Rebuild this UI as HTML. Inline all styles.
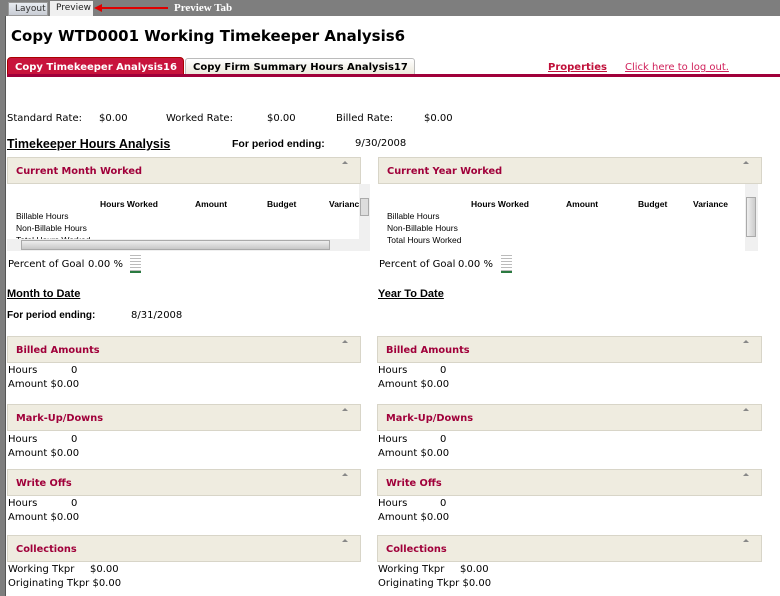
<!DOCTYPE html>
<html><head><meta charset="utf-8"><style>
*{margin:0;padding:0;box-sizing:border-box}
body{width:780px;height:596px;position:relative;overflow:hidden;background:#fff;font-family:"DejaVu Sans",Verdana,sans-serif;font-size:10px;color:#000}
.a{position:absolute;white-space:nowrap;margin-top:2px}
.ph{position:absolute;height:27px;background:#efece0;border:1px solid #d8d5c8}
.ph span{position:absolute;left:8px;top:8px;color:#a0003a;font-weight:bold;font-size:9.8px}
.ph i{position:absolute;right:12px;top:3px;width:0;height:0;border-left:3px solid transparent;border-right:3px solid transparent;border-bottom:3px solid #888}
.ar{font-family:"Liberation Sans",Arial,sans-serif}
.sm{font-family:"Liberation Sans",Arial,sans-serif;font-size:8.5px}
.bar{position:absolute;width:11px;height:18px;background:repeating-linear-gradient(#bbb 0 1px,#fff 1px 3px)}
.bar:after{content:"";position:absolute;left:0;bottom:0;width:11px;height:2px;background:#2a7a40}
.z{margin-top:0}
</style></head><body>
<div class="a z" style="left:0;top:0;width:780px;height:16px;background:#7e7e7e"></div>
<div class="a z" style="left:0;top:0;width:5px;height:596px;background:#7e7e7e"></div>
<div class="a z" style="left:5px;top:16px;width:1px;height:580px;background:#555"></div>
<div class="a z" style="left:8px;top:2px;width:40px;height:14px;background:linear-gradient(#e8ecf2,#c8ccd4);border:1px solid #999;font-size:9px;padding:1px 0 0 6px;color:#333">Layout</div>
<div class="a z" style="left:50px;top:1px;width:43px;height:15px;background:#f0f0f0;font-size:9px;padding:2px 0 0 6px;color:#222">Preview</div>
<div class="a z" style="left:98px;top:7px;width:70px;height:2px;background:#e00000"></div>
<div class="a z" style="left:94px;top:4px;width:0;height:0;border-top:4px solid transparent;border-bottom:4px solid transparent;border-right:8px solid #e00000"></div>
<div class="a z" style="left:174px;top:2px;color:#fff;font-family:'Liberation Serif',serif;font-weight:bold;font-size:11px">Preview Tab</div>
<div class="a" style="left:11px;top:25px;font-weight:bold;font-size:15px">Copy WTD0001 Working Timekeeper Analysis6</div>
<div class="a z" style="left:7px;top:57px;width:177px;height:19px;background:#c8143c;border:1px solid #a00;border-radius:4px 4px 0 0;color:#fff;font-weight:bold;font-size:10px;padding:4px 0 0 7px">Copy Timekeeper Analysis16</div>
<div class="a z" style="left:185px;top:58px;width:230px;height:17px;background:linear-gradient(#fff,#ece9dc);border:1px solid #bbb;border-radius:3px 3px 0 0;font-weight:bold;font-size:10px;padding:3px 0 0 7px">Copy Firm Summary Hours Analysis17</div>
<div class="a z" style="left:7px;top:74px;width:773px;height:3px;background:#a0003a"></div>
<div class="a" style="left:548px;top:60px;color:#c0103a;font-weight:bold;text-decoration:underline">Properties</div>
<div class="a" style="left:625px;top:60px;color:#d0205a;text-decoration:underline">Click here to log out.</div>
<div class="a" style="left:7px;top:111px">Standard Rate:</div><div class="a" style="left:99px;top:111px">$0.00</div>
<div class="a" style="left:166px;top:111px">Worked Rate:</div><div class="a" style="left:267px;top:111px">$0.00</div>
<div class="a" style="left:336px;top:111px">Billed Rate:</div><div class="a" style="left:424px;top:111px">$0.00</div>
<div class="a ar" style="left:7px;top:135px;font-weight:bold;font-size:12.5px;text-decoration:underline">Timekeeper Hours Analysis</div>
<div class="a ar" style="left:232px;top:136px;font-weight:bold;font-size:10.5px">For period ending:</div>
<div class="a" style="left:355px;top:136px">9/30/2008</div>

<div class="ph" style="left:7px;top:157px;width:354px"><span>Current Month Worked</span><i></i></div>
<div class="ph" style="left:378px;top:157px;width:384px"><span>Current Year Worked</span><i></i></div>
<div class="a z" style="left:7px;top:184px;width:364px;height:67px;overflow:hidden">
 <div class="a sm" style="left:93px;top:13px;font-weight:bold">Hours Worked</div>
 <div class="a sm" style="left:188px;top:13px;font-weight:bold">Amount</div>
 <div class="a sm" style="left:260px;top:13px;font-weight:bold">Budget</div>
 <div class="a sm" style="left:322px;top:13px;font-weight:bold;width:30px;overflow:hidden">Variance</div>
 <div class="a sm" style="left:9px;top:25px">Billable Hours</div>
 <div class="a sm" style="left:9px;top:37px">Non-Billable Hours</div>
 <div class="a sm" style="left:9px;top:49px">Total Hours Worked</div>
 <div class="a z" style="left:352px;top:0;width:11px;height:55px;background:#f0f0f0"><div style="position:absolute;top:14px;left:1px;width:9px;height:18px;background:#ddd;border:1px solid #aaa"></div></div>
 <div class="a z" style="left:0;top:55px;width:363px;height:12px;background:#f0f0f0"><div style="position:absolute;left:14px;top:1px;width:309px;height:10px;background:linear-gradient(#eee,#c8c8c8);border:1px solid #aaa"></div></div>
</div>
<div class="a z" style="left:378px;top:184px;width:384px;height:67px">
 <div class="a sm" style="left:93px;top:13px;font-weight:bold">Hours Worked</div>
 <div class="a sm" style="left:188px;top:13px;font-weight:bold">Amount</div>
 <div class="a sm" style="left:260px;top:13px;font-weight:bold">Budget</div>
 <div class="a sm" style="left:315px;top:13px;font-weight:bold">Variance</div>
 <div class="a sm" style="left:9px;top:25px">Billable Hours</div>
 <div class="a sm" style="left:9px;top:37px">Non-Billable Hours</div>
 <div class="a sm" style="left:9px;top:49px">Total Hours Worked</div>
 <div class="a z" style="left:367px;top:0;width:13px;height:67px;background:#f0f0f0"><div style="position:absolute;top:13px;left:1px;width:10px;height:40px;background:linear-gradient(90deg,#eee,#ccc);border:1px solid #aaa"></div></div>
</div>
<div class="a" style="left:8px;top:257px">Percent of Goal</div><div class="a" style="left:88px;top:257px">0.00 %</div><div class="bar" style="left:130px;top:255px"></div>
<div class="a" style="left:379px;top:257px">Percent of Goal</div><div class="a" style="left:458px;top:257px">0.00 %</div><div class="bar" style="left:501px;top:255px"></div>

<div class="a ar" style="left:7px;top:286px;font-weight:bold;font-size:11px;text-decoration:underline">Month to Date</div>
<div class="a ar" style="left:378px;top:286px;font-weight:bold;font-size:11px;text-decoration:underline">Year To Date</div>
<div class="a ar" style="left:7px;top:308px;font-weight:bold;font-size:10px">For period ending:</div>
<div class="a" style="left:131px;top:308px">8/31/2008</div>

<div class="ph" style="left:7px;top:336px;width:354px"><span>Billed Amounts</span><i></i></div>
<div class="ph" style="left:377px;top:336px;width:385px"><span>Billed Amounts</span><i></i></div>
<div class="a" style="left:8px;top:363px">Hours</div><div class="a" style="left:71px;top:363px">0</div>
<div class="a" style="left:8px;top:377px">Amount $0.00</div>
<div class="a" style="left:378px;top:363px">Hours</div><div class="a" style="left:440px;top:363px">0</div>
<div class="a" style="left:378px;top:377px">Amount $0.00</div>

<div class="ph" style="left:7px;top:404px;width:354px"><span>Mark-Up/Downs</span><i></i></div>
<div class="ph" style="left:377px;top:404px;width:385px"><span>Mark-Up/Downs</span><i></i></div>
<div class="a" style="left:8px;top:432px">Hours</div><div class="a" style="left:71px;top:432px">0</div>
<div class="a" style="left:8px;top:446px">Amount $0.00</div>
<div class="a" style="left:378px;top:432px">Hours</div><div class="a" style="left:440px;top:432px">0</div>
<div class="a" style="left:378px;top:446px">Amount $0.00</div>

<div class="ph" style="left:7px;top:469px;width:354px"><span>Write Offs</span><i></i></div>
<div class="ph" style="left:377px;top:469px;width:385px"><span>Write Offs</span><i></i></div>
<div class="a" style="left:8px;top:496px">Hours</div><div class="a" style="left:71px;top:496px">0</div>
<div class="a" style="left:8px;top:510px">Amount $0.00</div>
<div class="a" style="left:378px;top:496px">Hours</div><div class="a" style="left:440px;top:496px">0</div>
<div class="a" style="left:378px;top:510px">Amount $0.00</div>

<div class="ph" style="left:7px;top:535px;width:354px"><span>Collections</span><i></i></div>
<div class="ph" style="left:377px;top:535px;width:385px"><span>Collections</span><i></i></div>
<div class="a" style="left:8px;top:562px">Working Tkpr</div><div class="a" style="left:90px;top:562px">$0.00</div>
<div class="a" style="left:8px;top:576px">Originating Tkpr $0.00</div>
<div class="a" style="left:378px;top:562px">Working Tkpr</div><div class="a" style="left:460px;top:562px">$0.00</div>
<div class="a" style="left:378px;top:576px">Originating Tkpr $0.00</div>
</body></html>
